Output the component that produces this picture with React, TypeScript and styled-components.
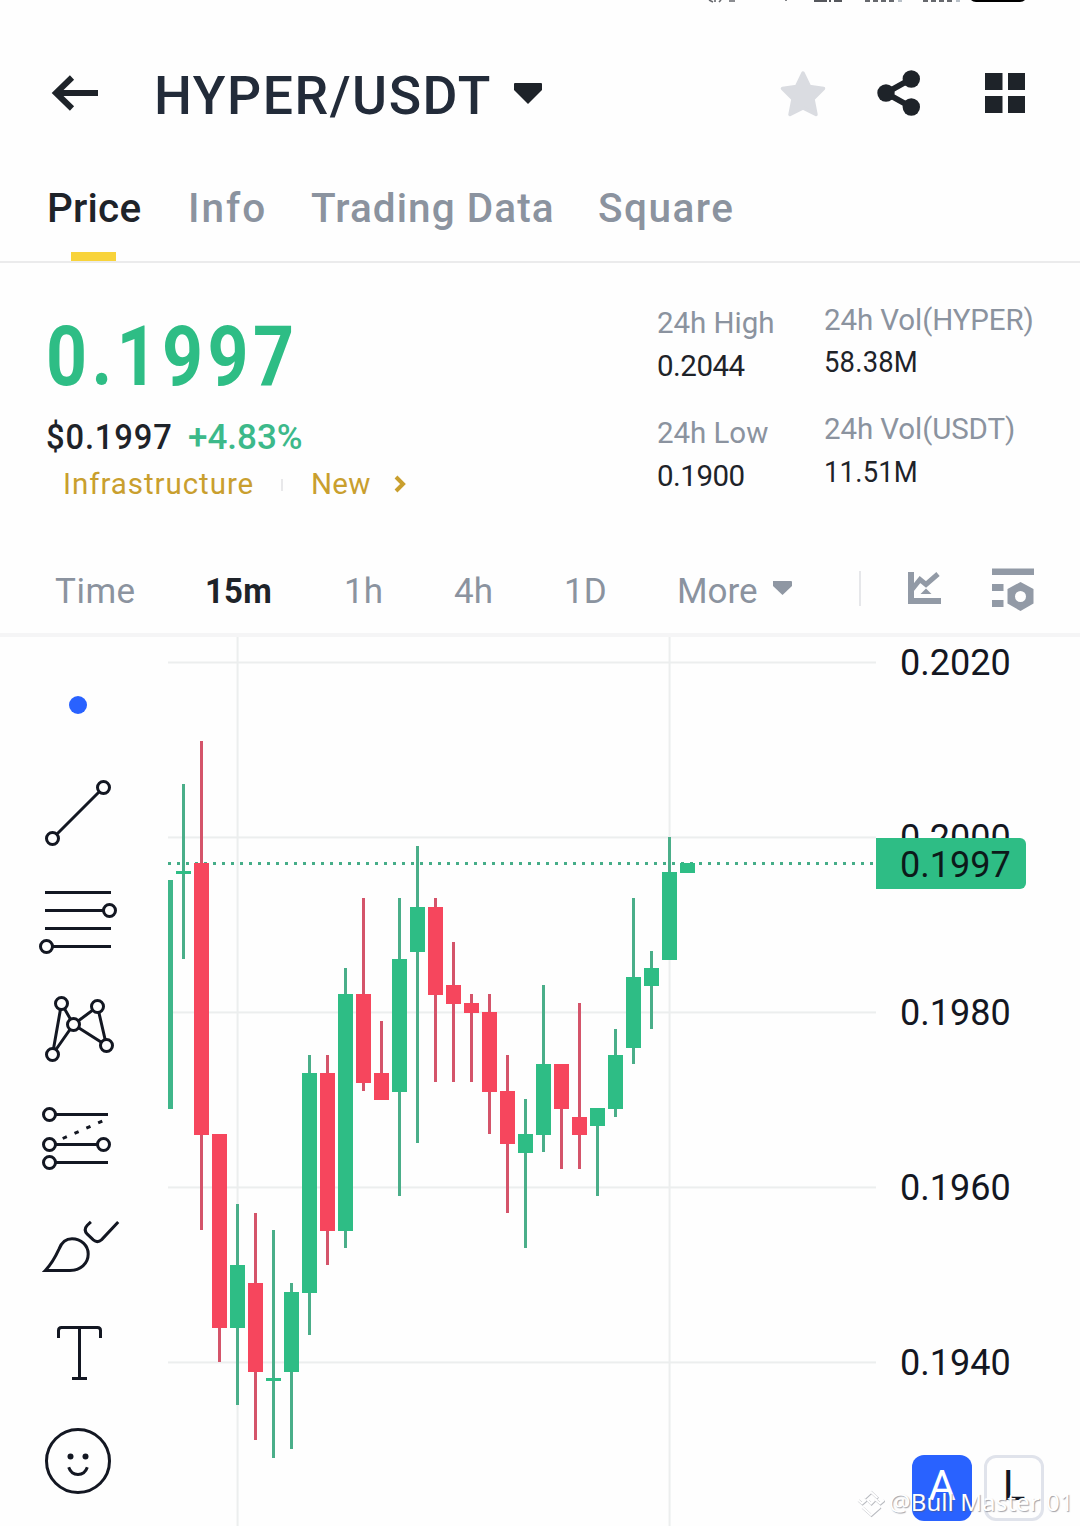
import React from "react";
import styled, { createGlobalStyle } from "styled-components";

const GREEN = "#2ebd85";
const RED = "#f6465d";
const INK = "#1e2329";
const MUTED = "#8b939f";

const GlobalStyle = createGlobalStyle`
  * { box-sizing: border-box; }
  body { margin: 0; background: #fefefe; }
`;

const Page = styled.div`
  display: flex;
  flex-direction: column;
  width: 1080px;
  height: 1526px;
  overflow: hidden;
  background: #fefefe;
  color: ${INK};
  font-family: Roboto, "Liberation Sans", sans-serif;
`;

const Text = styled.span<{
  $size: number;
  $ls?: number;
  $weight?: number;
  $color?: string;
  $lh?: number;
  $narrow?: number;
}>`
  display: block;
  font-size: ${(p) => p.$size}px;
  letter-spacing: ${(p) => p.$ls ?? 0}px;
  font-weight: ${(p) => p.$weight ?? 400};
  color: ${(p) => p.$color ?? INK};
  line-height: ${(p) => (p.$lh ? `${p.$lh}px` : "1.2")};
  white-space: nowrap;
  transform: ${(p) => (p.$narrow ? `scaleX(${p.$narrow})` : "none")};
  transform-origin: 0 50%;
`;

const StatusBar = styled.div`
  height: 8px;
  flex: none;
  svg { display: block; }
`;

const Header = styled.header`
  display: flex;
  align-items: center;
  height: 170px;
  flex: none;
  padding: 0 51px 0 48px;
`;

const PairButton = styled.div`
  display: flex;
  align-items: center;
  width: 440px;
  margin-left: 48px;
  padding-top: 6px;
  svg { margin-bottom: 6px; }
`;

const PairName = styled.div`
  width: 360px;
`;

const HeaderActions = styled.div`
  display: flex;
  align-items: center;
  margin-left: auto;
  svg { display: block; }
  svg:nth-child(2) { margin: 0 50px 0 48px; }
`;

const Tabs = styled.nav`
  display: flex;
  height: 85px;
  flex: none;
  padding: 2px 0 0 47px;
  border-bottom: 2px solid #ebebec;
`;

const Tab = styled.div<{ $width: number }>`
  display: flex;
  flex-direction: column;
  width: ${(p) => p.$width}px;
`;

const TabMarker = styled.div`
  width: 45px;
  height: 9px;
  margin: 16px 0 0 24px;
  background: #f8d33a;
`;

const Summary = styled.section`
  display: flex;
  height: 284px;
  flex: none;
`;

const PriceBlock = styled.div`
  display: flex;
  flex-direction: column;
  width: 657px;
  padding: 52px 0 0 46px;
`;

const FiatRow = styled.div`
  display: flex;
  margin-top: 15px;
`;

const FiatPrice = styled.div`
  width: 142px;
`;

const Tags = styled.div`
  display: flex;
  align-items: center;
  padding-left: 17px;
  height: 46px;
`;

const TagSlot = styled.div<{ $width: number }>`
  width: ${(p) => p.$width}px;
`;

const TagDivider = styled.div`
  width: 2px;
  height: 12px;
  margin-right: 28px;
  background: #e8e8ea;
`;

const StatColumn = styled.div<{ $width: number; $top: number }>`
  width: ${(p) => p.$width}px;
  padding-top: ${(p) => p.$top}px;
`;

const Stat = styled.div`
  height: 110px;
`;

const Intervals = styled.div`
  display: grid;
  grid-template-columns: 150px 139px 110px 110px 113px 94px 88px 48px 85px 60px;
  align-items: center;
  height: 90px;
  flex: none;
  padding-left: 55px;
  border-bottom: 4px solid #f5f5f6;
  svg { display: block; }
  > span { padding-top: 3px; }
`;

const IntervalDivider = styled.div`
  width: 2px;
  height: 35px;
  background: #e6e7ea;
  margin-bottom: 3px;
`;

const ChartPanel = styled.main`
  display: flex;
  height: 889px;
  position: relative;
`;

const ToolColumn = styled.div`
  display: flex;
  flex-direction: column;
  width: 168px;
  padding: 14px 0 0 36px;
`;

const ToolCell = styled.div`
  display: flex;
  align-items: center;
  width: 84px;
  height: 108px;
  flex: none;
`;

const ToolSvg = styled.svg`
  display: block;
  overflow: visible;
  fill: none;
  stroke: #131722;
  stroke-width: 1;
`;

const Plot = styled.svg`
  display: block;
  flex: none;
`;

const Axis = styled.div`
  position: relative;
  display: flex;
  flex-direction: column;
  width: 204px;
  padding-top: 1px;
`;

const AxisLabel = styled.div`
  height: 175px;
  padding-left: 24px;
  flex: none;
`;

const LastPrice = styled.div`
  position: absolute;
  top: 201px;
  left: 0;
  width: 150px;
  height: 51px;
  padding-left: 24px;
  border-radius: 0 6px 6px 0;
  background: ${GREEN};
`;

const ScaleButtons = styled.div`
  display: flex;
  gap: 12px;
  padding-left: 36px;
  margin-top: -58px;
`;

const ScaleButton = styled.div<{ $active?: boolean }>`
  display: flex;
  justify-content: center;
  width: 60px;
  height: 66px;
  padding-top: ${(p) => (p.$active ? 10 : 7)}px;
  border-radius: 12px;
  border: ${(p) => (p.$active ? "none" : "3px solid #e0e3eb")};
  background: ${(p) => (p.$active ? "#2962ff" : "#fefefe")};
`;

const Watermark = styled.div`
  position: absolute;
  left: 857px;
  top: 847px;
  display: flex;
  align-items: center;
  gap: 4px;
  height: 36px;
  color: #fff;
  font-family: "Noto Sans", sans-serif;
  font-size: 24px;
  letter-spacing: 0.1px;
  white-space: nowrap;
  text-shadow: 1px 1px 1px rgba(90, 90, 100, 0.55);
  svg { display: block; margin-top: 4px; flex: none; }
  span { margin-top: -1px; }
`;

const Caret = ({ width, height, color }: { width: number; height: number; color: string }) => (
  <svg width={width} height={height} viewBox="0 0 28 21" preserveAspectRatio="none">
    <path d="M1 0H27Q28 0 28 1V7L14 21L0 7V1Q0 0 1 0Z" fill={color} />
  </svg>
);

type Candle = [up: boolean, high: number, low: number, top: number, bottom: number];

// Vertical extents are in plot pixels; candles are spaced 18px apart.
const candles: Candle[] = [
  [true, 784, 959, 871, 874],
  [false, 741, 1230, 863, 1135],
  [false, 1134, 1362, 1134, 1328],
  [true, 1204, 1405, 1265, 1328],
  [false, 1213, 1440, 1283, 1372],
  [true, 1230, 1458, 1378, 1381],
  [true, 1283, 1449, 1292, 1372],
  [true, 1055, 1335, 1073, 1293],
  [false, 1055, 1265, 1073, 1231],
  [true, 968, 1248, 994, 1231],
  [false, 898, 1091, 994, 1083],
  [false, 1021, 1100, 1073, 1100],
  [true, 898, 1196, 959, 1092],
  [true, 846, 1143, 907, 952],
  [false, 898, 1082, 907, 995],
  [false, 942, 1082, 985, 1004],
  [false, 994, 1082, 1003, 1013],
  [false, 994, 1134, 1012, 1092],
  [false, 1055, 1213, 1091, 1144],
  [true, 1099, 1248, 1134, 1153],
  [true, 985, 1152, 1064, 1135],
  [false, 1064, 1169, 1064, 1109],
  [false, 1003, 1169, 1117, 1135],
  [true, 1108, 1196, 1108, 1126],
  [true, 1029, 1117, 1055, 1109],
  [true, 898, 1064, 977, 1048],
  [true, 951, 1029, 968, 986],
  [true, 837, 960, 872, 960],
  [true, 863, 873, 863, 873],
];

const priceLabels = ["0.2020", "0.2000", "0.1980", "0.1960", "0.1940"];

const Node = ({ x, y }: { x: number; y: number }) => <circle cx={x} cy={y} r={2} fill="#fefefe" />;

const tools: { name: string; art: React.ReactNode }[] = [
  { name: "cursor", art: <circle cx="14" cy="14" r="3" fill="#2962ff" stroke="none" /> },
  {
    name: "trend",
    art: (
      <>
        <path d="M5.5 22.5L22.5 5.5" />
        <Node x={22.5} y={5.5} />
        <Node x={5.5} y={22.5} />
      </>
    ),
  },
  {
    name: "levels",
    art: (
      <>
        <path d="M3 4.5H25M3 10.5H24M3 16.5H25M4 22.5H25" />
        <Node x={24.5} y={10.5} />
        <Node x={3.5} y={22.5} />
      </>
    ),
  },
  {
    name: "pattern",
    art: (
      <>
        <path d="M5.5 22.5L8.5 5.5L12.5 12.5L20.5 6.5L23.5 19.5L12.5 12.5Z" />
        <Node x={8.5} y={5.5} />
        <Node x={20.5} y={6.5} />
        <Node x={12.5} y={12.5} />
        <Node x={5.5} y={22.5} />
        <Node x={23.5} y={19.5} />
      </>
    ),
  },
  {
    name: "forecast",
    art: (
      <>
        <path d="M4.5 6.5H24M4.5 16.5H22.5M4.5 22.5H24" />
        <path d="M8.9 14.5L22.6 8.5" strokeDasharray="1.5 2.8" />
        <Node x={4.5} y={6.5} />
        <Node x={4.5} y={16.5} />
        <Node x={22.5} y={16.5} />
        <Node x={4.5} y={22.5} />
      </>
    ),
  },
  {
    name: "brush",
    art: (
      <>
        <path d="M3.1 22.5C5.3 20.2 6.6 17.7 7.7 15.3C8.5 13.2 10 11.9 12 11.9C15 11.9 17.4 14.2 17.4 17C17.4 20.2 14.8 22.5 11.3 22.5Z" />
        <path d="M18.3 6.3L17.1 7.4Q15.7 8.9 17.1 10.4L19.1 12.3Q20.5 13.5 21.9 12.2L27.4 6.3" />
      </>
    ),
  },
  {
    name: "text",
    art: <path d="M7.5 9V6.5Q7.5 5.5 8.5 5.5H20.5Q21.5 5.5 21.5 6.5V9M14.5 5.5V22.5M12 22.5H17" />,
  },
  {
    name: "emoji",
    art: (
      <>
        <circle cx="14" cy="14" r="10.5" />
        <circle cx="11.5" cy="12.5" r="1" fill="#131722" stroke="none" />
        <circle cx="16.5" cy="12.5" r="1" fill="#131722" stroke="none" />
        <path d="M10.9 16.1C12 19.3 16 19.3 17.1 16.1" />
      </>
    ),
  },
];

const Candles = () => (
  <Plot width="708" height="889" viewBox="168 637 708 889">
    <g fill="#eceeee">
      {[661.5, 836.4, 1011.4, 1186.4, 1361.4].map((y) => (
        <rect key={y} x="168" y={y} width="708" height="2" />
      ))}
      <rect x="236.6" y="637" width="2" height="889" />
      <rect x="668.6" y="637" width="2" height="889" />
    </g>
    <g shapeRendering="crispEdges">
      <path d="M168 863.5H876" stroke="#45ad88" strokeWidth="3" strokeDasharray="3 6" />
      <rect x="168" y="880" width="5" height="229" fill="#3fb68a" />
      {candles.map(([up, high, low, top, bottom], i) => {
        const x = 176 + i * 18;
        return (
          <g key={i}>
            <rect x={x + 6} y={high} width="3" height={low - high} fill={up ? "#4aae89" : "#d4546a"} />
            <rect x={x} y={top} width="15" height={bottom - top} fill={up ? GREEN : RED} />
          </g>
        );
      })}
    </g>
  </Plot>
);

const WatermarkLogo = () => {
  const d = "M7.5 8L14 2L20.5 8M5 17L14 25L23 17M1 10L5 13.5L9 10M19 10L23 13.5L27 10M10.5 10L14 13.5L17.5 10";
  return (
    <svg width="28" height="28" viewBox="0 0 28 28" fill="none">
      <path d={d} stroke="#b9bbc0" strokeWidth="2.6" transform="translate(0.6 0.6)" />
      <path d={d} stroke="#fff" strokeWidth="2" />
    </svg>
  );
};

export default function App() {
  return (
    <Page>
      <GlobalStyle />
      <StatusBar>
        <svg width="1080" height="8" viewBox="0 0 1080 8">
          <path d="M709 0L713 2M715 0V2M721 0L719 2M729 1H735M786 0V1" stroke="#66686d" strokeWidth="1.6" />
          <path d="M814 1H827M830 0V2M834 1H842" stroke="#55575c" strokeWidth="2" />
          <path d="M865 1H895M923 1H953" stroke="#66686d" strokeWidth="2" strokeDasharray="5 3" />
          <path d="M898 1H902M956 1H960" stroke="#b8c0c8" strokeWidth="2" />
          <path d="M971 0H1025Q1023 2 1020 2H976Q973 2 971 0Z" fill="#000" />
        </svg>
      </StatusBar>

      <Header>
        <svg width="58" height="48" viewBox="48 69 58 48">
          <path d="M98 93H56M72 77.5L56 93L72 108.5" fill="none" stroke={INK} strokeWidth="6" />
        </svg>
        <PairButton>
          <PairName>
            <Text $size={53.5} $weight={500} $ls={1.55} $lh={60} $color="#222b39">HYPER/USDT</Text>
          </PairName>
          <Caret width={28} height={21} color={INK} />
        </PairButton>
        <HeaderActions>
          <svg width="52" height="52" viewBox="777 67 52 52">
            <path
              d="M803 73L809.5 86.5L823.5 88.5L813 99L816 114.5L803 108L790 114.5L793 99L782.5 88.5L796.5 86.5Z"
              fill="#dadce1"
              stroke="#dadce1"
              strokeWidth="3.5"
              strokeLinejoin="round"
            />
          </svg>
          <svg width="46" height="48" viewBox="877 69 46 48">
            <path d="M911 79L886 93L911 107" fill="none" stroke={INK} strokeWidth="6" />
            <g fill={INK}>
              <circle cx="911.3" cy="79" r="8.7" />
              <circle cx="886" cy="93" r="8.7" />
              <circle cx="911.3" cy="107" r="8.7" />
            </g>
          </svg>
          <svg width="56" height="44" viewBox="973 71 56 44">
            <path d="M985 73H1002.5V90H985ZM1008 73H1025V90H1008ZM985 96H1002.5V113H985ZM1008 96H1025V113H1008Z" fill={INK} />
          </svg>
        </HeaderActions>
      </Header>

      <Tabs>
        <Tab $width={141}>
          <Text $size={40.5} $weight={500} $ls={0.2} $lh={56}>Price</Text>
          <TabMarker />
        </Tab>
        <Tab $width={123}>
          <Text $size={40.5} $weight={500} $ls={2} $lh={56} $color={MUTED}>Info</Text>
        </Tab>
        <Tab $width={287}>
          <Text $size={40.5} $weight={500} $ls={1.05} $lh={56} $color={MUTED}>Trading Data</Text>
        </Tab>
        <Tab $width={140}>
          <Text $size={40.5} $weight={500} $ls={1.5} $lh={56} $color={MUTED}>Square</Text>
        </Tab>
      </Tabs>

      <Summary>
        <PriceBlock>
          <Text $size={83} $weight={700} $ls={5.1} $narrow={0.862} $lh={84} $color={GREEN}>0.1997</Text>
          <FiatRow>
            <FiatPrice>
              <Text $size={35} $weight={500} $ls={0.9} $narrow={0.935} $lh={48}>$0.1997</Text>
            </FiatPrice>
            <Text $size={35} $weight={500} $ls={0} $lh={48} $color="#3cb98a">+4.83%</Text>
          </FiatRow>
          <Tags>
            <TagSlot $width={218}>
              <Text $size={29.5} $ls={0.95} $color="#c99f2e">Infrastructure</Text>
            </TagSlot>
            <TagDivider />
            <TagSlot $width={83}>
              <Text $size={29.5} $ls={0.3} $color="#c99f2e">New</Text>
            </TagSlot>
            <svg width="14" height="20" viewBox="0 0 14 20">
              <path d="M2 2L9 9L2 16" fill="none" stroke="#c99f2e" strokeWidth="4" />
            </svg>
          </Tags>
        </PriceBlock>
        <StatColumn $width={167} $top={39}>
          <Stat>
            <Text $size={29.5} $lh={43} $ls={-0.05} $color={MUTED}>24h High</Text>
            <Text $size={29.5} $lh={43} $ls={-0.5}>0.2044</Text>
          </Stat>
          <Stat>
            <Text $size={29.5} $lh={43} $ls={-0.05} $color={MUTED}>24h Low</Text>
            <Text $size={29.5} $lh={43} $ls={-0.5}>0.1900</Text>
          </Stat>
        </StatColumn>
        <StatColumn $width={240} $top={36}>
          <Stat>
            <Text $size={29.5} $lh={42} $ls={-0.1} $color={MUTED}>24h Vol(HYPER)</Text>
            <Text $size={29.5} $lh={43} $ls={0.2} $narrow={0.93}>58.38M</Text>
          </Stat>
          <Stat>
            <Text $size={29.5} $lh={41} $ls={-0.1} $color={MUTED}>24h Vol(USDT)</Text>
            <Text $size={29.5} $lh={44} $ls={0.2} $narrow={0.93}>11.51M</Text>
          </Stat>
        </StatColumn>
      </Summary>

      <Intervals>
        <Text $size={35} $ls={0.5} $color={MUTED}>Time</Text>
        <Text $size={35} $ls={0.2} $narrow={0.94} $weight={700}>15m</Text>
        <Text $size={35} $color={MUTED}>1h</Text>
        <Text $size={35} $color={MUTED}>4h</Text>
        <Text $size={35} $color={MUTED}>1D</Text>
        <Text $size={35} $ls={0} $color={MUTED}>More</Text>
        <svg width="21" height="20" viewBox="0 0 21 20">
          <path d="M2 1H20Q21 1 21 2V6L11.5 15L2 6Z" fill="#8f97a3" />
        </svg>
        <IntervalDivider />
        <svg width="36" height="36" viewBox="906 572 36 36">
          <path d="M907 572H913V598H940V604H907Z" fill="#929aa6" />
          <path d="M911 589.5L919 579.5L925 584.5L937 574" fill="none" stroke="#929aa6" strokeWidth="5" />
          <path d="M919.5 594L925 588.5L930.5 594Z" fill="#929aa6" />
        </svg>
        <svg width="44" height="46" viewBox="993 567 44 46">
          <g fill="#929aa6">
            <path d="M993 568.5H1035V575H993ZM993 584H1004.5V591H993ZM993 600H1004.5V607H993Z" />
            <path fillRule="evenodd" d="M1021.5 582L1034.5 589V603.5L1021.5 611L1008.5 603.5V589ZM1021.5 591A5.5 5.5 0 1 0 1021.5 602A5.5 5.5 0 1 0 1021.5 591Z" />
          </g>
        </svg>
      </Intervals>

      <ChartPanel>
        <ToolColumn>
          {tools.map((tool) => (
            <ToolCell key={tool.name}>
              <ToolSvg width="84" height="84" viewBox="0 0 28 28">
                {tool.art}
              </ToolSvg>
            </ToolCell>
          ))}
        </ToolColumn>
        <Candles />
        <Axis>
          {priceLabels.map((label) => (
            <AxisLabel key={label}>
              <Text $size={36} $lh={50} $color="#131722">{label}</Text>
            </AxisLabel>
          ))}
          <LastPrice>
            <Text $size={36} $lh={54} $color="#0c1a1a">0.1997</Text>
          </LastPrice>
          <ScaleButtons>
            <ScaleButton $active>
              <Text $size={42} $lh={42} $color="#fff">A</Text>
            </ScaleButton>
            <ScaleButton>
              <Text $size={42} $lh={42} $color="#131722">L</Text>
            </ScaleButton>
          </ScaleButtons>
        </Axis>
        <Watermark>
          <WatermarkLogo />
          <span>@Bull Master 01</span>
        </Watermark>
      </ChartPanel>
    </Page>
  );
}
